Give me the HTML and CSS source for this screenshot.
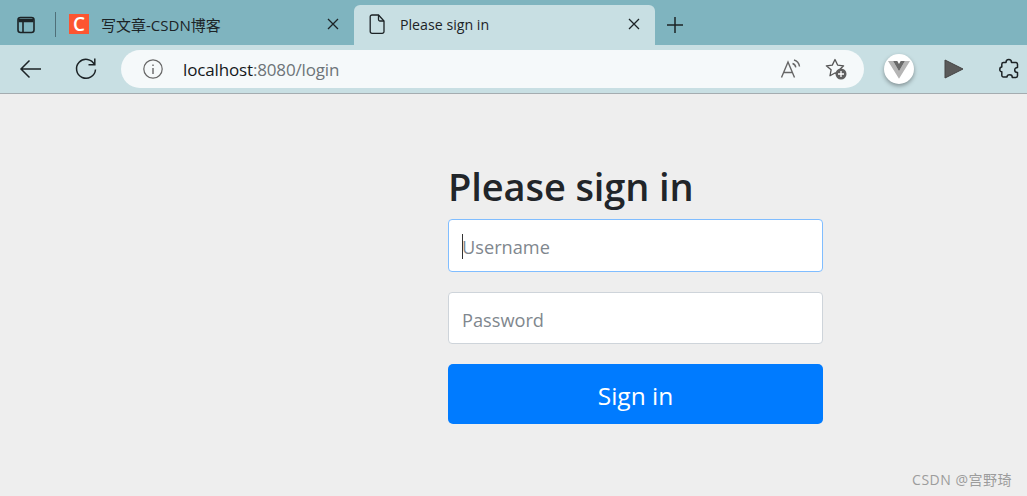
FILE: index.html
```html
<!DOCTYPE html>
<html lang="en">
<head>
  <meta charset="UTF-8">
  <title>Please sign in</title>
  <link rel="stylesheet" href="styles.css">
</head>
<body>
  <div class="tabstrip">
    <button class="strip-btn">
      <svg width="20" height="20" viewBox="0 0 20 20" fill="none" stroke="#1c2326" stroke-width="1.6"><rect x="2" y="2.5" width="16" height="15" rx="2.5"/><path d="M2.5 5.5h15" stroke-width="3.5"/><path d="M7 7v10"/></svg>
    </button>
    <div class="strip-sep"></div>
    <div class="tab">
      <span class="csdn-icon">C</span>
      <span class="tab-title">写文章-CSDN博客</span>
      <svg class="tab-close" width="12" height="12" viewBox="0 0 12 12" stroke="#1c2326" stroke-width="1.3"><path d="M1 1l10 10M11 1L1 11"/></svg>
    </div>
    <div class="tab active">
      <svg width="16" height="20" viewBox="0 0 16 20" fill="none" stroke="#1c2326" stroke-width="1.3"><path d="M3 1h6.5L15 7v10.5a1.8 1.8 0 0 1-1.8 1.8H3a1.8 1.8 0 0 1-1.8-1.8V2.8A1.8 1.8 0 0 1 3 1z"/><path d="M9.5 1v4.5a1.5 1.5 0 0 0 1.5 1.5h4"/></svg>
      <span class="tab-title">Please sign in</span>
      <svg class="tab-close" width="12" height="12" viewBox="0 0 12 12" stroke="#1c2326" stroke-width="1.3"><path d="M1 1l10 10M11 1L1 11"/></svg>
    </div>
    <button class="strip-btn new-tab">
      <svg width="18" height="18" viewBox="0 0 18 18" stroke="#1c2326" stroke-width="1.5"><path d="M9 1v16M1 9h16"/></svg>
    </button>
  </div>

  <div class="toolbar">
    <button class="tool-btn back">
      <svg width="24" height="20" viewBox="0 0 24 20" fill="none" stroke="#1c2326" stroke-width="1.5"><path d="M22 10H2M10.5 1.5L2 10l8.500 8.500"/></svg>
    </button>
    <button class="tool-btn reload">
      <svg width="24" height="24" viewBox="0 0 24 24" fill="none" stroke="#1c2326" stroke-width="1.5"><path d="M20.5 7.5A9.5 9.5 0 1 0 21.5 12.5"/><path d="M20.8 1.5V7.8H14.5"/></svg>
    </button>
    <div class="address">
      <svg width="20" height="20" viewBox="0 0 20 20" fill="none" stroke="#666" stroke-width="1.2"><circle cx="10" cy="10" r="9.2"/><path d="M10 9v6M10 5.5v1.5" stroke-width="1.4"/></svg>
      <div class="url"><span class="host">localhost</span>:8080/login</div>
      <svg class="read-icon" width="22" height="22" viewBox="0 0 22 22" fill="none" stroke="#666" stroke-width="1.4"><path d="M1.5 19.5L8 4l6.500 15.500M3.5 14.5h9"/><path d="M12.5 5.5c1.800.5 3 2 3.300 3.800M14 2c2.800.8 5 3.200 5.500 6.500"/></svg>
      <svg class="fav-icon" width="24" height="24" viewBox="0 0 24 24" fill="none"><path d="M11 2.5l2.600 5.600 6 .7-4.400 4.200 1 4-5.200-1-5 2.800 1.100-6L2.300 8.800l6-.7z" stroke="#555" stroke-width="1.3" stroke-linejoin="round"/><circle cx="17" cy="17" r="5.5" fill="#5f5f5f"/><path d="M17 14v6M14 17h6" stroke="#fff" stroke-width="1.3"/></svg>
    </div>
    <div class="vue-badge">
      <svg width="26" height="22" viewBox="0 0 26 22"><path d="M0 1h6l7 12L20 1h6L13 22z" fill="#b5b5b5"/><path d="M6 1h5l2 3.500L15 1h5l-7 12z" fill="#6a6a6a"/></svg>
    </div>
    <svg class="play-icon" width="20" height="22" viewBox="0 0 20 22"><path d="M1 2l18 9-18 9z" fill="#5a5a5a" stroke="#444"/></svg>
    <svg class="puzzle-icon" width="20" height="22" viewBox="0 0 20 22" fill="none" stroke="#1c2326" stroke-width="1.5" stroke-linejoin="round"><path d="M7 4.5C7 2.500 8.300 1.500 9.800 1.500s2.700 1 2.700 3h4.300c1 0 1.700.7 1.700 1.700v3.300c-1.800 0-2.800 1-2.800 2.500s1 2.500 2.800 2.500v3.300c0 1-.7 1.700-1.700 1.700h-3.500c0-1.700-1-2.700-2.500-2.700S8 17.300 8 19H4.500c-1 0-1.700-.7-1.700-1.700v-3.500C1.500 13.800.8 12.800.8 11.500S1.500 9 2.800 9V6.200c0-1 .7-1.700 1.700-1.700z"/></svg>
  </div>

  <main class="page">
    <form class="signin">
      <h2 class="signin-heading">Please sign in</h2>
      <div class="field">
        <input class="form-control focused" type="text" placeholder="Username">
        <span class="caret"></span>
      </div>
      <div class="field">
        <input class="form-control" type="password" placeholder="Password">
      </div>
      <button class="btn-primary" type="button">Sign in</button>
    </form>
    <div class="watermark">CSDN @宫野琦</div>
  </main>
</body>
</html>
```
FILE: styles.css
```css
html, body {
  margin: 0;
  height: 100%;
  overflow: hidden;
}
body {
  font-family: "Open Sans", "Noto Sans", "Noto Sans CJK SC", sans-serif;
  background: #eeeeee;
  display: flex;
  flex-direction: column;
}
button {
  border: none;
  background: none;
  padding: 0;
  font-family: inherit;
}

/* browser chrome */
.tabstrip {
  height: 45px;
  flex-shrink: 0;
  background: #7fb4bf;
  display: flex;
  align-items: flex-end;
  box-sizing: border-box;
}
.strip-btn {
  display: flex;
  align-items: center;
  justify-content: center;
  width: 52px;
  height: 40px;
}
.strip-sep {
  width: 1px;
  height: 25px;
  background: #4f6f78;
  margin: 0 3px 8px 3px;
}
.tab {
  height: 40px;
  width: 295px;
  box-sizing: border-box;
  display: flex;
  align-items: center;
  padding: 0 15px 2px 10px;
  font-size: 15px;
  color: #1c2326;
}
.tab.active {
  width: 301px;
  background: #c8dfe3;
  border-radius: 6px 6px 0 0;
  padding: 0 15px 2px;
  font-size: 14.2px;
}
.tab-title {
  flex: 1;
  margin-left: 12px;
  white-space: nowrap;
}
.tab.active .tab-title {
  margin-left: 15px;
}
.tab-close {
  flex-shrink: 0;
}
.csdn-icon {
  width: 20px;
  height: 20px;
  background: #fc5531;
  color: #fff;
  font-size: 19px;
  font-weight: 600;
  line-height: 20px;
  text-align: center;
  flex-shrink: 0;
}
.new-tab {
  width: 40px;
}
.toolbar {
  height: 49px;
  flex-shrink: 0;
  box-sizing: border-box;
  background: #c8dfe3;
  border-bottom: 1px solid #a4acb0;
  display: flex;
  align-items: center;
  padding: 0 0 0 19px;
}
.tool-btn {
  display: flex;
  align-items: center;
  justify-content: center;
  width: 24px;
  height: 24px;
}
.reload {
  margin-left: 31px;
}
.address {
  width: 743px;
  height: 38px;
  margin-left: 23px;
  background: #f5f9fa;
  border-radius: 19px;
  display: flex;
  align-items: center;
  padding-left: 22px;
  box-sizing: border-box;
}
.url {
  flex: 1;
  margin-left: 20px;
  font-size: 17px;
  color: #6d7478;
  letter-spacing: -0.15px;
}
.host {
  color: #14181a;
}
.read-icon {
  margin-right: 22px;
}
.fav-icon {
  margin-right: 16px;
}
.vue-badge {
  width: 30px;
  height: 30px;
  margin-left: 20px;
  border-radius: 50%;
  background: #fff;
  box-shadow: 0 2px 4px rgba(0,0,0,0.35);
  display: flex;
  align-items: center;
  justify-content: center;
}
.vue-badge svg {
  width: 22px;
  height: 19px;
}
.play-icon {
  margin-left: 30px;
}
.puzzle-icon {
  margin-left: 35px;
}

/* login page */
.page {
  flex: 1;
  position: relative;
  padding-left: 448px;
}
.signin {
  width: 375px;
  padding-top: 67px;
}
.signin-heading {
  margin: 0 0 8px;
  font-size: 38px;
  font-weight: 600;
  line-height: 50px;
  color: #212529;
  letter-spacing: -0.1px;
}
.field {
  position: relative;
  margin-bottom: 20px;
}
.form-control {
  display: block;
  width: 100%;
  height: 52px;
  box-sizing: border-box;
  padding: 3px 13px 0;
  font-family: inherit;
  font-size: 18.2px;
  color: #495057;
  background: #fff;
  border: 1px solid #ced4da;
  border-radius: 4px;
  outline: none;
}
.form-control::placeholder {
  color: #7f878e;
  opacity: 1;
}
.form-control.focused {
  height: 53px;
  padding-top: 3px;
  border-color: #80bdff;
}
.caret {
  position: absolute;
  left: 14px;
  top: 15px;
  width: 1px;
  height: 25px;
  background: #333;
}
.btn-primary {
  display: block;
  width: 100%;
  height: 60px;
  padding-top: 2px;
  background: #007bff;
  color: #fff;
  font-size: 24.5px;
  border-radius: 5px;
  text-align: center;
}
.watermark {
  position: absolute;
  right: 15px;
  bottom: 7px;
  font-size: 14px;
  letter-spacing: 0.5px;
  color: #9c9c9c;
}
```
